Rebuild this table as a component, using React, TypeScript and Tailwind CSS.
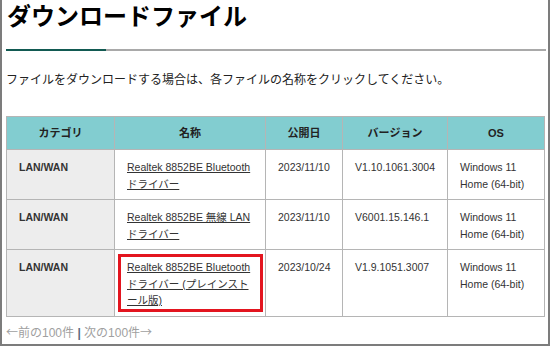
import React from "react";

const font = { fontFamily: '"Liberation Sans", "Noto Sans CJK JP", sans-serif' };
const cjk = { fontFamily: '"Noto Sans CJK JP", sans-serif' };

type Row = {
  category: string;
  name: React.ReactNode;
  date: string;
  version: string;
  highlight?: boolean;
};

const rows: Row[] = [
  {
    category: "LAN/WAN",
    name: (
      <>
        Realtek 8852BE Bluetooth
        <br />
        ドライバー
      </>
    ),
    date: "2023/11/10",
    version: "V1.10.1061.3004",
  },
  {
    category: "LAN/WAN",
    name: (
      <>
        Realtek 8852BE 無線 LAN
        <br />
        ドライバー
      </>
    ),
    date: "2023/11/10",
    version: "V6001.15.146.1",
  },
  {
    category: "LAN/WAN",
    name: (
      <>
        Realtek 8852BE Bluetooth
        <br />
        ドライバー (プレインスト
        <br />
        ール版)
      </>
    ),
    date: "2023/10/24",
    version: "V1.9.1051.3007",
    highlight: true,
  },
];

const th =
  "border border-[#b5b5b5] bg-[#82cdd0] text-center font-bold text-[11px] text-[#222] h-[33px] p-0 align-middle";
const td =
  "border border-[#b5b5b5] align-top pl-[12px] pr-[8px] pt-[9px] pb-[7px] text-[10.5px] leading-[16.5px] text-[#333]";

export default function App() {
  return (
    <div
      className="w-[550px] h-[346px] bg-white border-l-2 border-r-2 border-b-2 border-[#7c7c7c] overflow-hidden"
      style={font}
    >
      <div className="pl-[4px] pr-[2px]">
        <h1 className="mt-[1px] h-[32px] leading-[32px] text-[24px] font-bold text-black pl-[1px]">
          ダウンロードファイル
        </h1>
        <div className="mt-[16px] flex h-[2px]">
          <div className="w-[100px] bg-[#125a52]" />
          <div className="flex-1 bg-[#a9a9a9]" />
        </div>
        <p className="mt-[20px] h-[18px] leading-[18px] text-[12px] text-[#222]">
          ファイルをダウンロードする場合は、各ファイルの名称をクリックしてください。
        </p>
        <table className="mt-[27px] w-[538px] border-collapse table-fixed">
          <colgroup>
            <col className="w-[108px]" />
            <col className="w-[151px]" />
            <col className="w-[77px]" />
            <col className="w-[105px]" />
            <col className="w-[97px]" />
          </colgroup>
          <thead>
            <tr>
              <th className={th}>カテゴリ</th>
              <th className={th}>名称</th>
              <th className={th}>公開日</th>
              <th className={th}>バージョン</th>
              <th className={th}>OS</th>
            </tr>
          </thead>
          <tbody>
            {rows.map((r, i) => (
              <tr key={i}>
                <td className={`${td} bg-[#ededed] font-bold text-[#222]`}>{r.category}</td>
                <td className={`${td} relative`}>
                  <a className="underline text-[#333] cursor-pointer">{r.name}</a>
                  {r.highlight && (
                    <div className="absolute top-[4px] bottom-[4px] left-[3px] right-[2px] border-[3px] border-[#e3151f]" />
                  )}
                </td>
                <td className={td}>{r.date}</td>
                <td className={td}>{r.version}</td>
                <td className={td}>
                  Windows 11
                  <br />
                  Home (64-bit)
                </td>
              </tr>
            ))}
          </tbody>
        </table>
        <p className="mt-[6px] h-[18px] leading-[18px] text-[12px] text-[#a0a0a0]">
          <span style={cjk}>←</span>前の100件 <span className="text-[#5b6780] font-bold">|</span> 次の100件
          <span style={cjk}>→</span>
        </p>
      </div>
    </div>
  );
}
